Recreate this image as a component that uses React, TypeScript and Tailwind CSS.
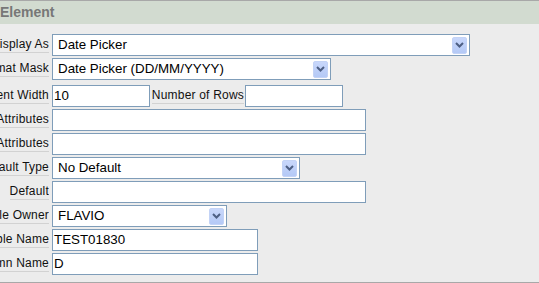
import React from "react";

const font = { fontFamily: '"Liberation Sans", Arial, sans-serif' };

function Label({ text, w }: { text: string; w?: string }) {
  return (
    <div className={`flex justify-end overflow-hidden h-[22px] shrink-0 ${w ?? "w-[49px]"}`}>
      <span className="shrink-0 whitespace-nowrap mt-[3px] h-[16px] leading-[15px] text-[12px] tracking-[0.2px] text-[#111] border-b border-[#d2d2d2]">
        {text}
      </span>
    </div>
  );
}

function Input({ value, w }: { value?: string; w: string }) {
  return (
    <div
      className={`h-[22px] ${w} shrink-0 bg-white border border-[#7f9db9] flex items-center pl-[1px] text-[13.33px] text-black leading-none whitespace-nowrap overflow-hidden`}
    >
      {value}
    </div>
  );
}

function Select({ value, w }: { value: string; w: string }) {
  return (
    <div
      className={`h-[22px] ${w} shrink-0 bg-white border border-[#7f9db9] flex items-center justify-between pl-[5px] pr-[2px] text-[13.33px] text-black leading-none whitespace-nowrap`}
    >
      <span>{value}</span>
      <div className="w-[15px] h-[17px] rounded-[2px] bg-gradient-to-b from-[#c8d7fb] to-[#b4c9f6] border border-[#c3d3f6] flex items-center justify-center">
        <svg width="9" height="6" viewBox="0 0 9 6">
          <path d="M1 1 L4.5 4.5 L8 1" fill="none" stroke="#4d5f84" strokeWidth="2" />
        </svg>
      </div>
    </div>
  );
}

function Row({ children, className }: { children: React.ReactNode; className?: string }) {
  return <div className={`flex items-start gap-[3px] h-[22px] ${className ?? "mt-[2px]"}`}>{children}</div>;
}

export default function App() {
  return (
    <div className="w-[539px] h-[283px] bg-[#ececec] overflow-hidden flex flex-col" style={font}>
      <div className="h-[24px] border-t border-[#a8a8a8] bg-[#d2dbd0] shrink-0">
        <div className="h-[23px] leading-[23px] text-[14px] font-bold text-[#777] whitespace-nowrap">Element</div>
      </div>
      <div className="flex flex-col">
        <Row className="mt-[10px]">
          <Label text="Display As" />
          <Select value="Date Picker" w="w-[418px]" />
        </Row>
        <Row>
          <Label text="Format Mask" />
          <Select value="Date Picker (DD/MM/YYYY)" w="w-[279px]" />
        </Row>
        <Row className="mt-[5px]">
          <Label text="Element Width" />
          <Input value="10" w="w-[98px]" />
          <div className="-ml-[2px] -mr-[2px] flex">
            <Label text="Number of Rows" w="w-[93px]" />
          </div>
          <Input w="w-[98px]" />
        </Row>
        <Row>
          <Label text="Element Attributes" />
          <Input w="w-[314px]" />
        </Row>
        <Row>
          <Label text="Element Option Attributes" />
          <Input w="w-[314px]" />
        </Row>
        <Row>
          <Label text="Default Type" />
          <Select value="No Default" w="w-[248px]" />
        </Row>
        <Row>
          <Label text="Default" />
          <Input w="w-[314px]" />
        </Row>
        <Row>
          <Label text="Table Owner" />
          <Select value="FLAVIO" w="w-[175px]" />
        </Row>
        <Row>
          <Label text="Table Name" />
          <Input value="TEST01830" w="w-[206px]" />
        </Row>
        <Row>
          <Label text="Column Name" />
          <Input value="D" w="w-[206px]" />
        </Row>
      </div>
      <div className="mt-auto h-[1px] bg-[#a8a8a8] shrink-0" />
    </div>
  );
}
